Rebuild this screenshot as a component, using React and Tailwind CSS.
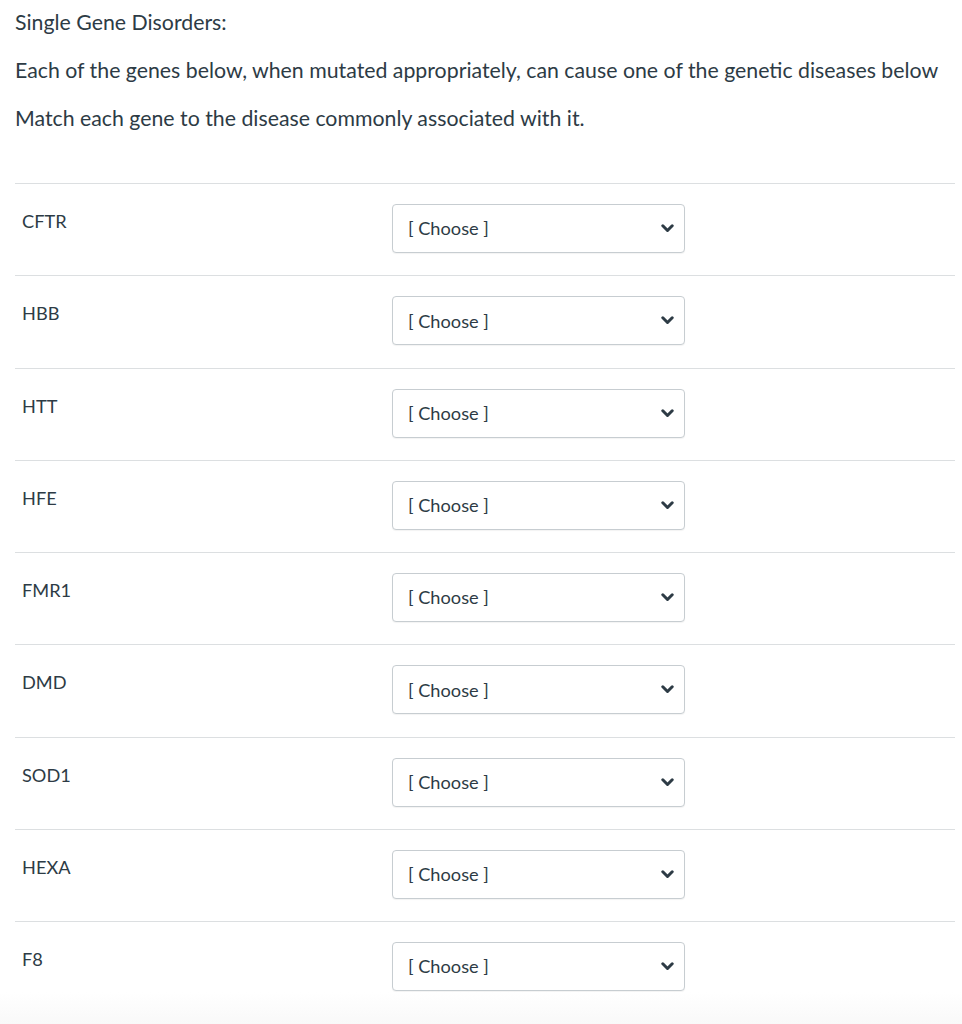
const genes = ['CFTR', 'HBB', 'HTT', 'HFE', 'FMR1', 'DMD', 'SOD1', 'HEXA', 'F8'];

const Chevron = () => (
  <svg width="13" height="9" viewBox="0 0 13 9" className="text-[#2d3b45]">
    <path d="M1.8 1.8 L6.5 6.5 L11.2 1.8" fill="none" stroke="currentColor" strokeWidth="3" strokeLinecap="round" strokeLinejoin="round" />
  </svg>
);

const GeneRow = ({ gene }) => (
  <div className="flex h-[92.25px] border-t border-[#dcdfe1]">
    <div className="w-[377px] pl-[7px] pt-[26px] text-[18.2px] leading-[22px]">{gene}</div>
    <div className="mt-[20px] flex h-[49px] w-[293px] items-center justify-between rounded-[4px] border border-[#c7cdd1] bg-white pl-[15px] pr-[10px] shadow-[0_1px_1px_rgba(0,0,0,0.05)]">
      <span className="text-[18.2px] leading-none">[ Choose ]</span>
      <Chevron />
    </div>
  </div>
);

const App = () => {
  return (
    <div className="relative min-h-[1024px] bg-white font-['Lato','Noto_Sans',sans-serif] text-[#2d3b45]">
      <div className="px-[15px] pt-[9px]">
        <p className="text-[21.3px] leading-[26px]">Single Gene Disorders:</p>
        <p className="mt-[22px] text-[21.3px] leading-[26px]">
          Each of the genes below, when mutated appropriately, can cause one of the genetic diseases below
        </p>
        <p className="mt-[22px] text-[21.3px] leading-[26px]">Match each gene to the disease commonly associated with it.</p>
      </div>
      <div className="mx-[15px] mt-[52px] w-[940px]">
        {genes.map((g) => (
          <GeneRow key={g} gene={g} />
        ))}
      </div>
      <div className="absolute bottom-0 left-0 right-0 h-[32px] bg-gradient-to-b from-white to-[#f9f9f9]" />
    </div>
  );
};

export default App;
